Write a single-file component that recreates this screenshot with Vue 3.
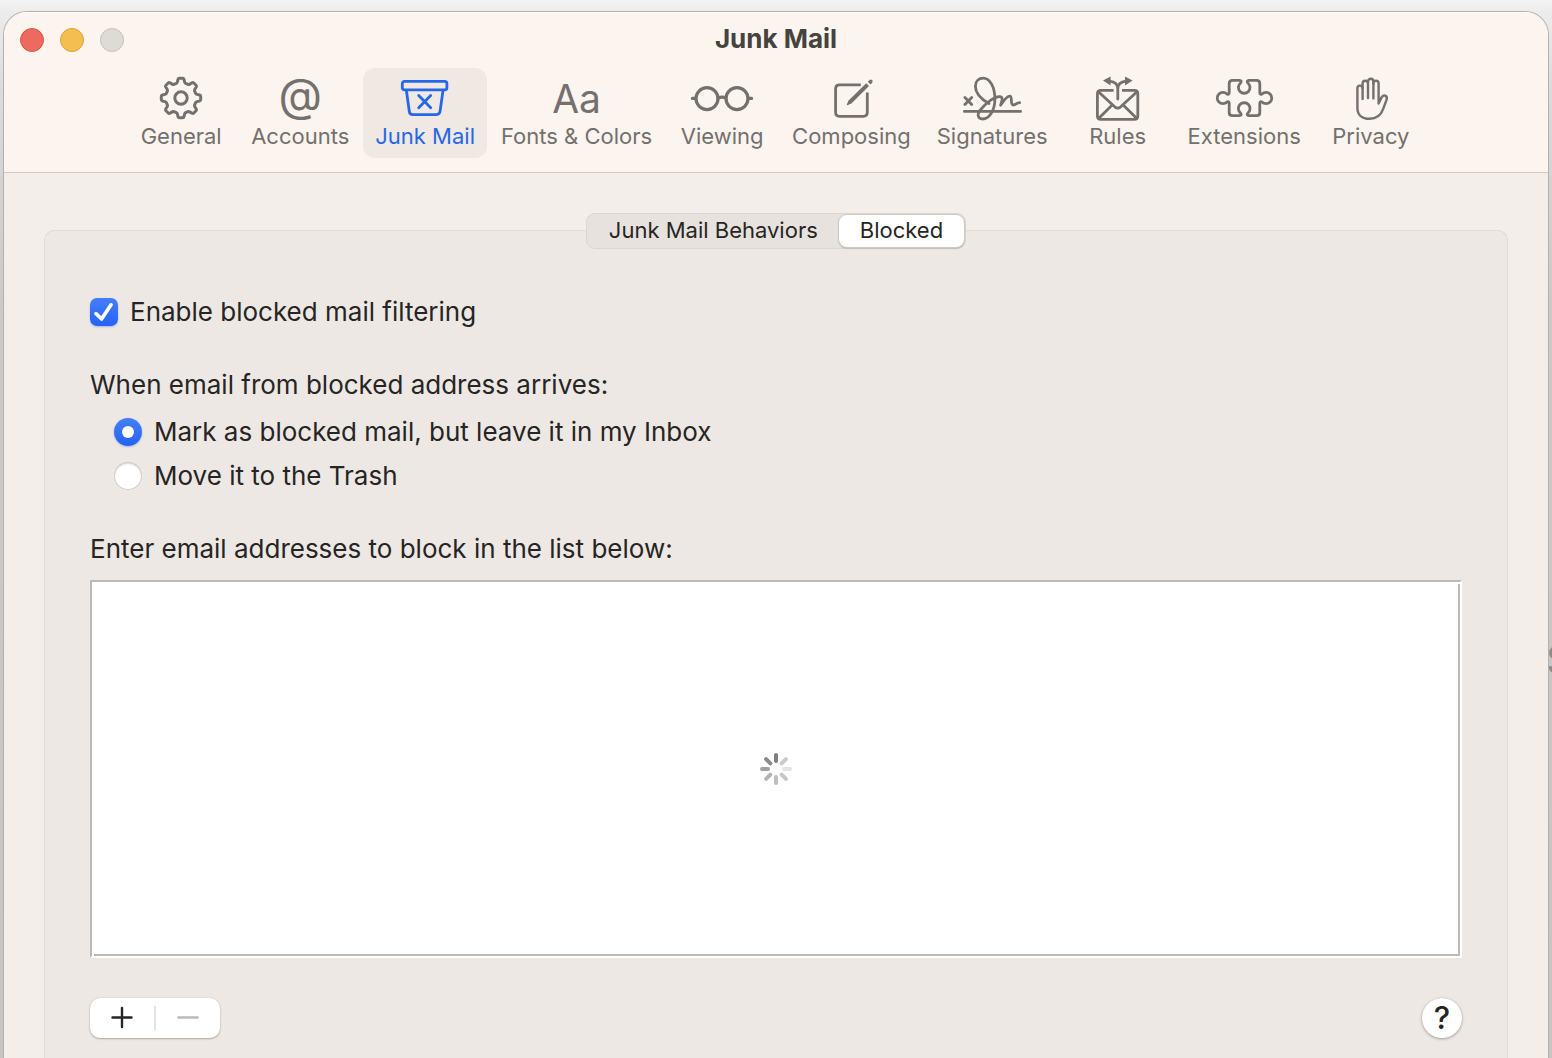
<script setup>
import { ref } from 'vue'

const tools = [
  { id: 'general', label: 'General' },
  { id: 'accounts', label: 'Accounts' },
  { id: 'junk', label: 'Junk Mail' },
  { id: 'fonts', label: 'Fonts & Colors' },
  { id: 'viewing', label: 'Viewing' },
  { id: 'composing', label: 'Composing' },
  { id: 'signatures', label: 'Signatures' },
  { id: 'rules', label: 'Rules' },
  { id: 'extensions', label: 'Extensions' },
  { id: 'privacy', label: 'Privacy' },
]
const tabs = ['Junk Mail Behaviors', 'Blocked']

const activeTool = ref('junk')
const activeTab = ref('Blocked')
const filtering = ref(true)
const action = ref('mark')

// spinner spokes, clockwise from the top
const spokes = ['#808080', '#cccccc', '#e4e4e4', '#c8c8c8', '#bebebe', '#b4b4b4', '#a0a0a0', '#8a8a8a']

// outline of the gear: eight rounded teeth round (32, 24)
function gearPath() {
  const at = (angle, r, side) => {
    const x = 32 + r * Math.cos(angle) - side * Math.sin(angle)
    const y = 24 + r * Math.sin(angle) + side * Math.cos(angle)
    return x.toFixed(2) + ' ' + y.toFixed(2)
  }
  let d = ''
  for (let i = 0; i < 8; i++) {
    const a = (i * Math.PI) / 4
    d += (i ? 'L' : 'M') + at(a, 14.6, -4.6)
    d += 'Q' + at(a, 15.2, -3.8) + ' ' + at(a, 16, -3.6)
    d += 'L' + at(a, 18.6, -3) + 'Q' + at(a, 19.7, -2.7) + ' ' + at(a, 19.7, -1.6)
    d += 'L' + at(a, 19.7, 1.6) + 'Q' + at(a, 19.7, 2.7) + ' ' + at(a, 18.6, 3)
    d += 'L' + at(a, 16, 3.6) + 'Q' + at(a, 15.2, 3.8) + ' ' + at(a, 14.6, 4.6)
  }
  return d + 'Z'
}
</script>

<template>
  <div class="desktop">
    <span class="behind" aria-hidden="true">S</span>
    <main class="window">
      <header class="header">
        <div class="titlebar">
          <div class="lights">
            <button class="light red" aria-label="Close"></button>
            <button class="light yellow" aria-label="Minimize"></button>
            <button class="light grey" aria-label="Zoom" disabled></button>
          </div>
          <h1>Junk Mail</h1>
        </div>
        <nav class="toolbar">
          <button
            v-for="tool in tools"
            :key="tool.id"
            class="tool"
            :class="{ active: activeTool === tool.id }"
            @click="activeTool = tool.id"
          >
            <span v-if="tool.id === 'accounts'" class="icon glyph at">@</span>
            <span v-else-if="tool.id === 'fonts'" class="icon glyph aa">Aa</span>
            <svg v-else class="icon" viewBox="0 0 64 48" aria-hidden="true">
              <g v-if="tool.id === 'general'" stroke-width="3">
                <path :d="gearPath()" />
                <circle cx="32" cy="24" r="6.2" />
              </g>
              <g v-else-if="tool.id === 'junk'">
                <rect x="9.3" y="7.3" width="44.6" height="8.6" rx="2.2" />
                <path d="M13.4 16.5L16.3 37.2Q16.7 40.6 20 40.6H43.4Q46.7 40.6 47.1 37.2L50 16.5" />
                <path d="M25.7 21.5L37.7 33.7M37.7 21.5L25.7 33.7" />
              </g>
              <g v-else-if="tool.id === 'viewing'" stroke-width="3.2">
                <circle cx="17" cy="24.6" r="11" />
                <circle cx="47" cy="24.6" r="11" />
                <path d="M28 24.2Q32 22 36 24.2M2.4 24.4H5.6M58.4 24.4H61.6" />
              </g>
              <g v-else-if="tool.id === 'composing'">
                <path stroke-linecap="butt" d="M41.8 10.8H20.6Q16.6 10.8 16.6 14.8V38.3Q16.6 42.3 20.6 42.3H44.3Q48.3 42.3 48.3 38.3V18.6" />
                <path class="fill" d="M47.2 9.2L50 12L32.4 29.4L28.4 31.2Q27.5 31.2 27.9 30.2L29.6 26.6Z" />
                <path class="fill" d="M48.8 7.8L50.4 6.2Q51.8 5 53 6.2Q54.2 7.6 53 8.9L51.4 10.5Z" />
              </g>
              <g v-else-if="tool.id === 'signatures'" stroke-width="2.8">
                <path d="M4.9 23.6L11.7 30.4M11.7 23.6L4.9 30.4M4.4 37.4H60.6" />
                <path d="M29 29.5C21 25 15.4 19 15.4 12.2C15.4 6.8 19 4.2 23.2 4.2C30 4.2 34.9 13 34.9 25C34.9 37 29 45 22.6 45C17.6 45 17 40 20 36.4C24 31.6 31 23.6 38.8 22.6C43.2 22.1 42.6 26 40.6 31.2C43.4 27 47 22.2 49.8 22.2C53 22.2 49.6 31 53.4 31C56.2 31 56 29 59.6 28.6" />
              </g>
              <g v-else-if="tool.id === 'rules'" stroke-width="2.8">
                <path stroke-linecap="butt" d="M27.6 16.4H14.8Q11.4 16.4 11.4 19.8V42Q11.4 45.4 14.8 45.4H48.4Q51.8 45.4 51.8 42V19.8Q51.8 16.4 48.4 16.4H36" />
                <path d="M12.4 17.8L28.7 32.8Q31.7 35.2 34.7 32.8L51 17.8M12.8 44.2L25.2 32M50.6 44.2L38.2 32" />
                <path d="M31.8 25V15C31.8 10 28 7.6 23.5 7.2M31.8 15C31.8 10 35.6 7.6 40 7.2" />
                <path class="fill" d="M17 6.6L24.6 2.6V11.6ZM46.6 6.6L39 2.6V11.6Z" />
              </g>
              <g v-else-if="tool.id === 'extensions'">
                <path d="M20.4 6.4H27.4Q30.2 6.6 28.5 9A5.8 5.8 0 1 0 35.9 9Q34.2 6.6 37 6.4H44.6Q47.8 6.4 47.8 9.6V18.4Q47.8 21.2 50 20A5.7 5.7 0 1 1 50 28Q47.8 26.8 47.8 29.6V38.4Q47.8 41.6 44.6 41.6H37Q34.2 41.4 35.9 39A5.8 5.8 0 1 0 28.5 39Q30.2 41.4 27.4 41.6H20.4Q17.2 41.6 17.2 38.4V29.6Q17.2 26.8 15 28A5.7 5.7 0 1 1 15 20Q17.2 21.2 17.2 18.4V9.6Q17.2 6.4 20.4 6.4Z" />
              </g>
              <g v-else stroke-width="2.4">
                <path d="M23.6 25V14.2A2.6 2.6 0 0 0 18.4 14.2V34C18.4 41 23 44.8 30.6 44.8C37 44.8 41.6 42 44 35.4L47.6 25.6C48.8 21.6 44.4 19.8 42.6 23.4L39.6 29.4V9.4A2.6 2.6 0 0 0 34.4 9.4V24.4" />
                <path d="M23.6 14.2V9.4A2.7 2.7 0 0 1 29 9.4V24M29 9.4V7.4A2.7 2.7 0 0 1 34.4 7.4V9.4" />
              </g>
            </svg>
            <span class="tool-label">{{ tool.label }}</span>
          </button>
        </nav>
      </header>

      <div class="content">
        <div class="segmented" role="tablist">
          <button
            v-for="tab in tabs"
            :key="tab"
            role="tab"
            class="segment"
            :class="{ selected: activeTab === tab }"
            :aria-selected="activeTab === tab"
            @click="activeTab = tab"
          >{{ tab }}</button>
        </div>

        <section class="panel">
          <div class="row">
            <input id="filtering" v-model="filtering" type="checkbox" />
            <label for="filtering">Enable blocked mail filtering</label>
          </div>

          <p id="arrives" class="caption">When email from blocked address arrives:</p>
          <div class="choices" role="radiogroup" aria-labelledby="arrives">
            <div class="row">
              <input id="mark" v-model="action" type="radio" name="action" value="mark" />
              <label for="mark">Mark as blocked mail, but leave it in my Inbox</label>
            </div>
            <div class="row">
              <input id="trash" v-model="action" type="radio" name="action" value="trash" />
              <label for="trash">Move it to the Trash</label>
            </div>
          </div>

          <p class="caption">Enter email addresses to block in the list below:</p>
          <div class="list">
            <div class="list-inner">
              <svg class="spinner" viewBox="-16 -16 32 32" role="img" aria-label="Loading">
                <line
                  v-for="(color, i) in spokes"
                  :key="i"
                  y1="-14"
                  y2="-8"
                  :stroke="color"
                  :transform="`rotate(${i * 45})`"
                />
              </svg>
            </div>
          </div>

          <footer class="footer">
            <div class="add-remove">
              <button aria-label="Add">
                <svg viewBox="0 0 24 24"><path d="M12 2V21M2.5 11.5H21.5" /></svg>
              </button>
              <span class="divider"></span>
              <button aria-label="Remove" disabled>
                <svg viewBox="0 0 24 24"><path d="M2.5 11.5H21.5" /></svg>
              </button>
            </div>
            <button class="help" aria-label="Help">?</button>
          </footer>
        </section>
      </div>
    </main>
  </div>
</template>

<style>
body {
  margin: 0;
}
</style>

<style scoped>
* {
  box-sizing: border-box;
}
button {
  margin: 0;
  padding: 0;
  border: 0;
  background: none;
  font: inherit;
  color: inherit;
}
.desktop {
  position: relative;
  display: flex;
  min-height: 100vh;
  padding: 11px 3px 0;
  overflow: hidden;
  background: linear-gradient(#f4f4f4, #ececec 12px, #dcdbdb 90px, #cbcaca 300px, #c6c5c5);
  font-family: Inter, "Liberation Sans", sans-serif;
  font-size: 26px;
  line-height: 32px;
  color: #262524;
}
/* text of the window underneath, cut by the screen edge */
.behind {
  position: absolute;
  top: 640px;
  right: 0;
  width: 6px;
  overflow: hidden;
  font-size: 40px;
  line-height: 40px;
  color: #8c8c8c;
}
.window {
  position: relative;
  flex: 1;
  display: flex;
  flex-direction: column;
  overflow: hidden;
  border: 1px solid #b3b0ae;
  border-bottom: 0;
  border-radius: 24px 24px 0 0;
  background: #f4eeea;
}
.header {
  padding-bottom: 14px;
  border-bottom: 1px solid #cfc8c4;
  background: #fcf4ef;
  box-shadow: inset 0 1px 0 #ffffff;
}
.titlebar {
  display: grid;
  grid-template-columns: 1fr auto 1fr;
  align-items: center;
  height: 56px;
  padding: 0 16px;
}
.lights {
  display: flex;
  gap: 16px;
}
.light {
  width: 24px;
  height: 24px;
  border: 1px solid #d9544a;
  border-radius: 50%;
  background: #ec6a5e;
}
.yellow {
  border-color: #d9a33c;
  background: #f4bf4f;
}
.grey {
  border-color: #c4bfbb;
  background: #dedad6;
}
h1 {
  margin: 0;
  padding-bottom: 2px;
  font-size: 26px;
  font-weight: 700;
  line-height: 32px;
  color: #454240;
}
.toolbar {
  display: flex;
  justify-content: center;
  gap: 2px;
}
.tool {
  display: flex;
  flex-direction: column;
  align-items: center;
  min-width: 112px;
  height: 90px;
  padding: 6px 12px;
  border-radius: 12px;
  color: #73706d;
}
.tool.active {
  background: #efe8e3;
  color: #2667e9;
}
.icon {
  flex: none;
  width: 64px;
  height: 48px;
  fill: none;
  stroke: currentColor;
  stroke-width: 2.8;
  stroke-linecap: round;
  stroke-linejoin: round;
}
.icon .fill {
  fill: currentColor;
  stroke: none;
}
.glyph {
  text-align: center;
}
.at {
  font-size: 45px;
  line-height: 42px;
}
.aa {
  font-size: 39px;
  line-height: 50px;
}
.tool-label {
  font-size: 22px;
  line-height: 28px;
  white-space: nowrap;
}
.content {
  flex: 1;
  display: flex;
  flex-direction: column;
  padding: 40px 40px 0;
}
.segmented {
  z-index: 1;
  display: flex;
  align-self: center;
  height: 36px;
  margin-bottom: -19px;
  padding: 1px;
  border: 1px solid #dcd6d2;
  border-radius: 9px;
  background: #e7e2dd;
}
.segment {
  padding: 0 21px 2px;
  border-radius: 8px;
  font-size: 22px;
  line-height: 30px;
}
.segment.selected {
  background: #ffffff;
  box-shadow: 0 0 0 1px #cfcac6, 0 1px 2px #8c8885;
}
.panel {
  flex: 1;
  padding: 65px 45px 20px;
  border: 1px solid #e1dbd7;
  border-bottom: 0;
  border-radius: 10px 10px 0 0;
  background: #ede8e4;
}
.row {
  display: flex;
  align-items: center;
  gap: 12px;
}
.caption {
  margin: 41px 0 15px;
}
.choices {
  display: flex;
  flex-direction: column;
  gap: 12px;
  padding-left: 24px;
}
input {
  appearance: none;
  display: grid;
  place-items: center;
  flex: none;
  width: 28px;
  height: 28px;
  margin: 0;
  background: #ffffff;
  box-shadow: inset 0 0 0 1px #d0ccc9, inset 0 2px 2px #dddad8;
}
input[type="checkbox"] {
  border-radius: 7px;
}
input[type="radio"] {
  border-radius: 50%;
}
input:checked {
  background: linear-gradient(#437ff8, #2562f6);
  box-shadow: 0 1px 2px #a9b6dc;
}
input[type="checkbox"]:checked::before {
  content: "";
  width: 20px;
  height: 20px;
  background: url("data:image/svg+xml,%3Csvg xmlns='http://www.w3.org/2000/svg' viewBox='0 0 20 20'%3E%3Cpath d='M2 11.6L7.6 17L17 2.8' fill='none' stroke='white' stroke-width='3.6' stroke-linecap='round' stroke-linejoin='round'/%3E%3C/svg%3E");
}
input[type="radio"]:checked::before {
  content: "";
  width: 12px;
  height: 12px;
  border-radius: 50%;
  background: #ffffff;
}
.list {
  display: flex;
  height: 378px;
  padding: 2px 0 0 2px;
  border: 2px solid #bababa;
  border-right-color: #ffffff;
  border-bottom-color: #ffffff;
  background: #ffffff;
}
.list-inner {
  flex: 1;
  display: grid;
  place-items: center;
  border-right: 2px solid #bababa;
  border-bottom: 2px solid #bababa;
}
.spinner {
  width: 32px;
  height: 32px;
  stroke-width: 4;
  stroke-linecap: round;
}
.footer {
  display: flex;
  justify-content: space-between;
  margin-top: 40px;
}
.add-remove {
  display: flex;
  align-items: center;
  width: 130px;
  height: 40px;
  border-radius: 10px;
  background: #ffffff;
  box-shadow: 0 0 1px #b5b0ad, 0 1px 2px #aaa6a3;
}
.add-remove button {
  flex: 1;
  display: grid;
  place-items: center;
  height: 40px;
}
.add-remove svg {
  width: 24px;
  height: 24px;
  fill: none;
  stroke: #262524;
  stroke-width: 2.4;
  stroke-linecap: round;
}
.add-remove button:disabled svg {
  stroke: #bcbcbc;
}
.divider {
  width: 2px;
  height: 24px;
  background: #e4e4e4;
}
.help {
  width: 40px;
  height: 40px;
  border-radius: 50%;
  background: #ffffff;
  box-shadow: 0 0 1px #b5b0ad, 0 1px 3px #a09c99;
  font-size: 31px;
  font-weight: 500;
  line-height: 40px;
  text-align: center;
}
</style>
